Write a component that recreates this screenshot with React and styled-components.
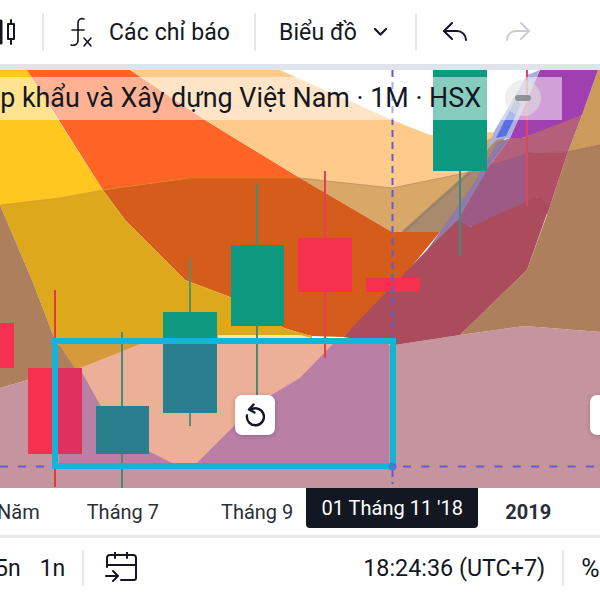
import React from 'react';
import styled, { createGlobalStyle } from 'styled-components';

const Global = createGlobalStyle`
  html, body { margin: 0; padding: 0; background: #fff; }
  #root { width: 600px; height: 600px; overflow: hidden; }
`;

const Page = styled.div`
  width: 600px; height: 600px; display: flex; flex-direction: column;
  font-family: Roboto, "Noto Sans", sans-serif; color: #131722; overflow: hidden; background: #fff;
`;
const TopBar = styled.header`
  height: 64px; flex: none; display: flex; align-items: center; border-bottom: 6px solid #e0e3eb;
  box-sizing: content-box;
`;
const Sep = styled.span`
  flex: none; width: 2px; height: ${p => p.$h || 38}px; background: #e6e8ee; margin-left: ${p => p.$ml}px;
`;
const Icon = styled.svg`
  flex: none; display: block; margin-left: ${p => p.$ml || 0}px; fill: none;
  stroke: ${p => p.$c || '#131722'}; stroke-width: ${p => p.$sw || 2}; stroke-linecap: round; stroke-linejoin: round;
`;
const Label = styled.span`
  flex: none; font-size: 23px; letter-spacing: .1px; white-space: nowrap; margin-left: ${p => p.$ml || 0}px;
`;
const ChartArea = styled.main`
  position: relative; height: 418px; flex: none; overflow: hidden; background: #fff;
`;
const ChartSvg = styled.svg`
  display: block; width: 600px; height: 418px;
`;
const Legend = styled.div`
  position: absolute; left: 0; top: 7px; width: 562px; height: 43px; background: rgba(255,255,255,.5);
  display: flex; align-items: center; justify-content: flex-end; overflow: hidden;
`;
const LegendText = styled.span`
  flex: none; font-size: 26.85px; white-space: nowrap; padding-right: 81px; padding-bottom: 2px; color: #131722;
`;
const Collapse = styled.div`
  position: absolute; left: 505px; top: 10px; width: 36px; height: 36px; border-radius: 50%;
  background: rgba(225,225,225,.55); display: flex; align-items: center; justify-content: center;
`;
const Dash = styled.span`
  width: 16px; height: 6px; border-radius: 3px; background: #8f9296;
`;
const FloatBtn = styled.div`
  position: absolute; left: ${p => p.$x}px; top: 325px; width: 40px; height: 40px; background: #fff;
  border-radius: 7px; box-shadow: 0 1px 4px rgba(60,40,60,.3); display: flex; align-items: center; justify-content: center;
`;
const AxisBar = styled.div`
  height: 47px; flex: none; display: flex; align-items: flex-start; border-bottom: 3px solid #e9eaee; overflow: hidden;
`;
const Tick = styled.span`
  flex: none; font-size: 20px; line-height: 24px; color: #2a2e39; white-space: nowrap;
  margin-top: 12px; margin-left: ${p => p.$ml}px; font-weight: ${p => p.$bold ? 700 : 400};
`;
const Cursor = styled.span`
  flex: none; width: 172px; height: 40px; margin-left: ${p => p.$ml}px; background: #131722; color: #fff;
  border-radius: 0 0 4px 4px; font-size: 20px; display: flex; align-items: center; justify-content: center;
`;
const BottomBar = styled.footer`
  flex: 1; display: flex; align-items: center; overflow: hidden; padding-bottom: 2px;
`;
const BottomText = styled.span`
  flex: none; font-size: ${p => p.$size || 23}px; white-space: nowrap; margin-left: ${p => p.$ml}px;
`;

const poly = [
  ['#ffc71f', '0,70 27,70 58,120 103,190 60,198 0,205'],
  ['#ff6427', '27,70 130,70 205,120 300,178 190,178 103,190'],
  ['#fecb8a', '130,70 280,70 392,120 430,135 495,132 487,150 470,172 392,188 300,178 205,120'],
  ['#d9a868', '300,178 392,188 470,172 487,140 497,135 510,130 490,165 403,232 392,232'],
  ['#a98a6c', '403,232 445,232 510,130 490,145 480,165 470,172'],
  ['#d55c1a', '103,190 190,178 300,178 392,232 440,232 392,290 343,337 312,336 300,333 284,328 230,297 185,280 125,220'],
  ['#dda81c', '0,205 60,198 103,190 125,220 185,280 230,297 284,328 300,333 312,336 312,340 145,345 118,353 75,368 55,340 32,280'],
  ['#fbe5a5', '218,335 300,335 312,338 218,338'],
  ['#ae7f5c', '0,205 32,280 55,340 75,368 60,372 28,380 0,388'],
  ['#c5949e', '0,388 28,380 75,368 300,340 395,345 460,335 525,326 600,332 600,488 0,488'],
  ['#cc9a5a', '582,115 598,70 600,70 600,145 568,152'],
  ['#ae7f5c', '460,335 527,270 547,215 568,152 600,145 600,332 525,326'],
  ['#a040b0', '540,70 598,70 582,115 570,122 522,138 510,138'],
  ['#a9b0e0', '487,150 495,130 527,75 540,70 510,138 496,140'],
  ['#5a70e0', '496,138 515,100 521,104 506,136'],
  ['#8f7aa8', '427,250 440,232 473,185 497,143 510,138 490,165 470,227'],
  ['#b5607a', '510,138 522,138 582,115 568,152 527,153 490,165'],
  ['#9c5a85', '490,165 527,153 527,205 470,227 458,220'],
  ['#b04f62', '527,153 568,152 547,215 537,197 527,205'],
  ['#ab4c5c', '343,337 427,250 458,220 470,227 537,197 550,205 527,270 460,335 395,345'],
  ['#ecaf97', '59,344 333,344 300,378 255,405 197,463 172,463 150,452 100,405 80,369 59,375'],
  ['#b97fa5', '333,344 389,344 389,463 197,463 255,405 300,378'],
  ['#b97fa5', '59,375 80,369 100,405 150,452 172,463 59,463'],
  ['#ae7f5c', '59,344 75,368 59,374'],
  ['#d69a3a', '59,344 140,344 80,368 75,368'],
];

const candles = [
  { x: 0, w: 14, y1: 323, y2: 368, c: '#f6304f', wx: null },
  { x: 28, w: 54, y1: 368, y2: 454, c: '#f6304f', wx: 55, w1: 290, w2: 487, wc: '#e03a3a' },
  { x: 96, w: 53, y1: 406, y2: 454, c: '#2a7f8f', wx: 122, w1: 332, w2: 488, wc: '#4b8a6e' },
  { x: 163, w: 54, y1: 312, y2: 413, c: '#2a7f8f', wx: 190, w1: 258, w2: 426, wc: '#5b8f6a' },
  { x: 231, w: 53, y1: 245, y2: 326, c: '#0d9a80', wx: 257, w1: 184, w2: 395, wc: '#4b8a6e' },
  { x: 298, w: 54, y1: 238, y2: 292, c: '#f6304f', wx: 325, w1: 171, w2: 358, wc: '#e8404a' },
  { x: 366, w: 54, y1: 278, y2: 292, c: '#f6304f', wx: null },
  { x: 433, w: 54, y1: 70, y2: 171, c: '#0d9a80', wx: 460, w1: 171, w2: 256, wc: '#3f8a7c' },
];

function Chart() {
  return (
    <ChartSvg viewBox="0 70 600 418">
      <rect x="0" y="70" width="600" height="418" fill="#fff" />
      {poly.map(([fill, points], i) => <polygon key={i} fill={fill} points={points} />)}
      <path d="M300 178 L392 188 L470 172" fill="none" stroke="#a9784c" strokeWidth="1" opacity=".6" />
      <path d="M403 232 L470 172" fill="none" stroke="#8f7a66" strokeWidth="3" opacity=".7" />
      <path d="M490 165 L527 153 L567 152 L600 145" fill="none" stroke="#8a4a55" strokeWidth="1" opacity=".5" />
      <path d="M0 205 L60 198 L103 190 L190 178 L300 178" fill="none" stroke="#c98a1a" strokeWidth="1" opacity=".6" />
      <line x1="527" y1="70" x2="527" y2="206" stroke="#e0455f" strokeWidth="2" />
      {candles.map((k, i) => (
        <g key={i}>
          {k.wx !== null && <line x1={k.wx} x2={k.wx} y1={k.w1} y2={k.w2} stroke={k.wc} strokeWidth="2" />}
          <rect x={k.x} y={k.y1} width={k.w} height={k.y2 - k.y1} fill={k.c} />
        </g>
      ))}
      <rect x="163" y="312" width="54" height="28" fill="#0d9a80" />
      <rect x="58" y="368" width="24" height="86" fill="#e0305f" />
      <line x1="392.5" y1="70" x2="392.5" y2="338" stroke="#5a5fd6" strokeWidth="2" strokeDasharray="7 5" />
      <line x1="392.5" y1="470" x2="392.5" y2="484" stroke="#5a5fd6" strokeWidth="2" strokeDasharray="7 5" />
      <line x1="0" y1="466.5" x2="46" y2="466.5" stroke="#5a5fd6" strokeWidth="2" strokeDasharray="8 10" />
      <line x1="403" y1="466.5" x2="600" y2="466.5" stroke="#5a5fd6" strokeWidth="2" strokeDasharray="8 10.3" />
      <rect x="55" y="341" width="338" height="125" fill="none" stroke="#12b5d6" strokeWidth="6" />
      <circle cx="392.5" cy="466.5" r="4" fill="#3f7fd6" />
    </ChartSvg>
  );
}

export default function App() {
  return (
    <Page>
      <Global />
      <TopBar>
        <Icon $ml={-1} width="18" height="30" viewBox="0 0 18 30">
          <path d="M2 4v22" strokeWidth="3" />
          <rect x="9" y="7" width="6" height="15" />
          <path d="M12 3v4M12 22v5" />
        </Icon>
        <Sep $ml={25} />
        <Icon $ml={24} width="26" height="32" viewBox="0 0 26 32" $sw={1.6}>
          <path d="M16 3c-3-1-6 0-6 4v18c0 3-3 5-7 4" />
          <path d="M4 14h12" />
          <path d="M16 22l7 8M23 22l-7 8" />
        </Icon>
        <Label $ml={15}>Các chỉ báo</Label>
        <Sep $ml={24} />
        <Label $ml={23}>Biểu đồ</Label>
        <Icon $ml={16} width="15" height="10" viewBox="0 0 15 10" $sw={2.2}>
          <path d="M2 2l5.5 5.5L13 2" />
        </Icon>
        <Sep $ml={27} />
        <Icon $ml={26} width="24" height="24" viewBox="0 0 24 24">
          <path d="M9 3L1 11l8 8" />
          <path d="M1 11h13a9 9 0 0 1 9 9" />
        </Icon>
        <Icon $ml={39} width="24" height="24" viewBox="0 0 24 24" $c="#c9ccd3">
          <path d="M15 3l8 8-8 8" />
          <path d="M23 11H10a9 9 0 0 0-9 9" />
        </Icon>
      </TopBar>

      <ChartArea>
        <Chart />
        <Legend>
          <LegendText>Tổng Công ty Xuất nhập khẩu và Xây dựng Việt Nam · 1M · HSX</LegendText>
        </Legend>
        <Collapse><Dash /></Collapse>
        <FloatBtn $x={235}>
          <Icon width="22" height="24" viewBox="0 0 22 24" $sw={2.4}>
            <path d="M7 6.5a8.5 8.5 0 1 1-4 6" />
            <path d="M9.5 1.5L5 6.5l5.5 3" />
          </Icon>
        </FloatBtn>
        <FloatBtn $x={590} />
      </ChartArea>

      <AxisBar>
        <Tick $ml={-3}>Năm</Tick>
        <Tick $ml={47}>Tháng 7</Tick>
        <Tick $ml={62}>Tháng 9</Tick>
        <Cursor $ml={13}>01 Tháng 11 '18</Cursor>
        <Tick $ml={27} $bold>2019</Tick>
      </AxisBar>

      <BottomBar>
        <BottomText $ml={-5}>5n</BottomText>
        <BottomText $ml={19}>1n</BottomText>
        <Sep $ml={17} $h={36} />
        <Icon $ml={21} width="32" height="32" viewBox="0 0 32 32">
          <path d="M2 15V6a3 3 0 0 1 3-3h23a3 3 0 0 1 3 3v20a2 2 0 0 1-2 2H16" />
          <path d="M2 13h29" />
          <path d="M10 0v6M22 0v6" />
          <path d="M1 24h12M8 19l5 5-5 5" />
        </Icon>
        <BottomText $ml={226} $size={23.3}>18:24:36 (UTC+7)</BottomText>
        <Sep $ml={17} $h={36} />
        <BottomText $ml={17} $size={25}>%</BottomText>
      </BottomBar>
    </Page>
  );
}
